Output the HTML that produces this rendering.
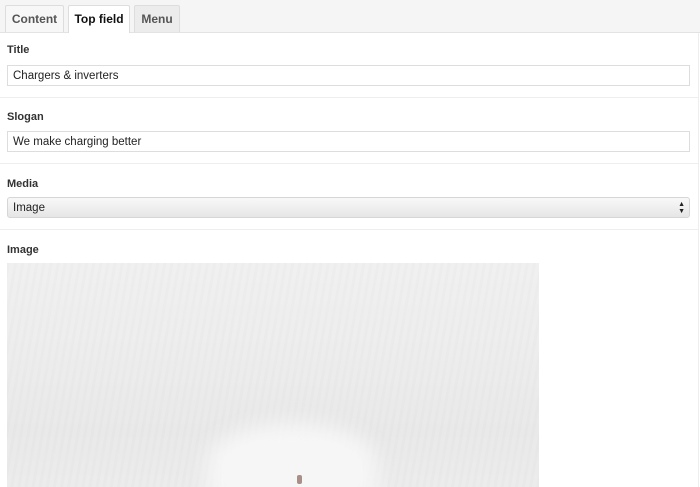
<!DOCTYPE html>
<html><head><style>
body{margin:0;width:700px;height:487px;overflow:hidden;background:#fff;font-family:"Liberation Sans",Arial,sans-serif;position:relative}
.tabs{position:absolute;left:0;top:0;width:700px;height:32px;background:#f5f5f5;border-bottom:1px solid #e3e3e3}
.tab{position:absolute;top:5px;height:27px;box-sizing:border-box;border:1px solid #ddd;border-bottom:none;font-size:12px;font-weight:bold;color:#555;text-align:center;line-height:26px;border-radius:2px 2px 0 0}
.sep{position:absolute;left:0;width:698px;height:1px;background:#eee}
.lbl{position:absolute;left:7px;font-size:11px;font-weight:bold;color:#333}
.inp{position:absolute;left:7px;width:683px;height:21px;box-sizing:border-box;border:1px solid #ddd;font-size:11.5px;color:#222;padding-left:5px;line-height:20px;background:#fff}
.rb{position:absolute;left:698px;top:33px;width:1px;height:454px;background:#eee}
</style></head><body>
<div class="tabs">
<div class="tab" style="left:5px;width:59px;background:#f7f7f7">Content</div>
<div class="tab" style="left:68px;width:62px;background:#fff;color:#111;height:28px">Top field</div>
<div class="tab" style="left:134px;width:46px;background:#ececec">Menu</div>
</div>
<div class="rb"></div>
<div class="lbl" style="top:44px">Title</div>
<div class="inp" style="top:65px">Chargers &amp; inverters</div>
<div class="sep" style="top:97px"></div>
<div class="lbl" style="top:111px">Slogan</div>
<div class="inp" style="top:131px">We make charging better</div>
<div class="sep" style="top:163px"></div>
<div class="lbl" style="top:178px">Media</div>
<div class="inp" style="top:197px;border-radius:3px;background:linear-gradient(#f8f8f8,#e6e6e6);border-color:#d6d6d6">Image<span style="position:absolute;right:4px;font-size:7px;line-height:7px;top:3px">▲<br>▼</span></div>
<div class="sep" style="top:229px"></div>
<div class="lbl" style="top:244px">Image</div>
<div style="position:absolute;left:7px;top:263px;width:532px;height:224px;background:linear-gradient(#f0f0f0,#ededed 40%,#e9e9e9 75%,#ececec);overflow:hidden">
<div style="position:absolute;left:0;top:0;width:532px;height:224px;background:repeating-linear-gradient(100deg,rgba(0,0,0,0.012) 0 3px,rgba(255,255,255,0.02) 3px 7px)"></div>
<div style="position:absolute;left:200px;top:160px;width:170px;height:80px;background:#f6f6f6;border-radius:50% 50% 0 0;filter:blur(10px)"></div>
<div style="position:absolute;left:290px;top:212px;width:5px;height:9px;background:#a89088;border-radius:2px"></div>
</div>
</body></html>
